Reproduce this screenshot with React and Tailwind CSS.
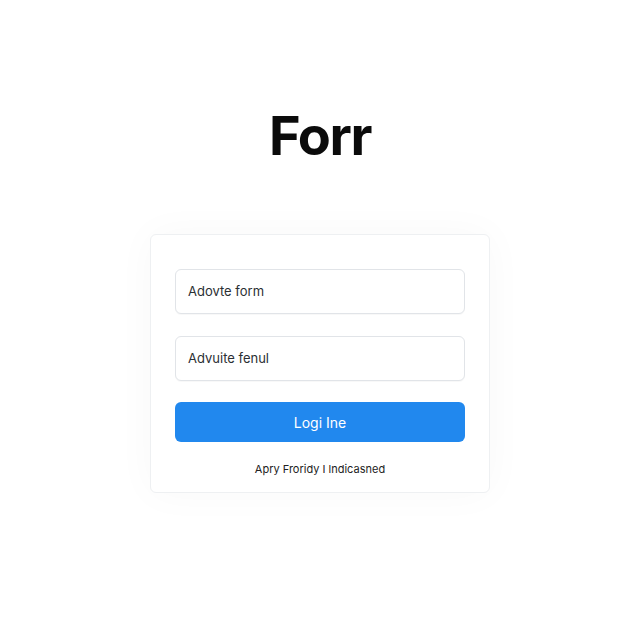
export default function App() {
    return (
        <div
            className="min-h-[640px] w-full bg-white flex flex-col items-center"
            style={{ fontFamily: "Inter, 'Noto Sans', sans-serif" }}
        >
            {/* Title */}
            <h1 className="mt-[109px] text-[54px] leading-none font-bold text-[#0b0b0b] tracking-tight">
                Forr
            </h1>

            {/* Card */}
            <div className="mt-[71px] w-[340px] bg-white rounded-md border border-[#eef0f2] shadow-[0_0_40px_rgba(0,0,0,0.03)] px-6 pt-[34px] pb-[15px]">
                <div className="flex flex-col gap-[22px]">
                    <div className="h-[45px] rounded-md border border-[#e1e4e8] bg-white flex items-center px-3 text-[13px] text-[#2b2f33] shadow-[0_1px_1px_rgba(0,0,0,0.03)]">
                        Adovte form
                    </div>
                    <div className="h-[45px] rounded-md border border-[#e1e4e8] bg-white flex items-center px-3 text-[13px] text-[#2b2f33] shadow-[0_1px_1px_rgba(0,0,0,0.03)]">
                        Advuite fenul
                    </div>
                </div>
                <button className="mt-[21px] w-full h-[40px] rounded-md bg-[#2188ee] text-white text-[14px] flex items-center justify-center">
                    Logi Ine
                </button>
                <p className="mt-[19px] text-center text-[11px] text-[#222] leading-4">
                    Apry Froridy I lndicasned
                </p>
            </div>
        </div>
    );
}
